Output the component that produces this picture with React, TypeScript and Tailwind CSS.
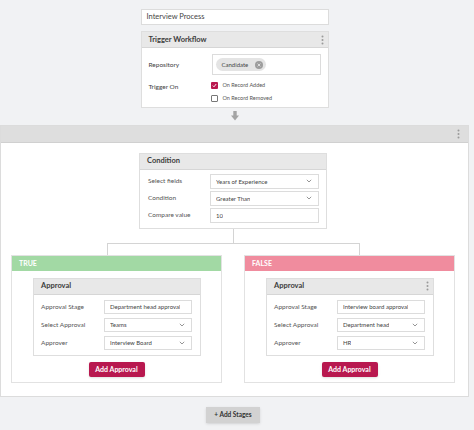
import React from 'react';

const Kebab: React.FC = () => (
  <svg width="3" height="10" viewBox="0 0 3 10" className="text-[#9a9a9a]">
    <circle cx="1.5" cy="1.5" r="1" fill="currentColor" />
    <circle cx="1.5" cy="5" r="1" fill="currentColor" />
    <circle cx="1.5" cy="8.5" r="1" fill="currentColor" />
  </svg>
);

const Chevron: React.FC = () => (
  <svg width="6" height="4" viewBox="0 0 6 4" fill="none">
    <polyline points="0.8,0.8 3,3 5.2,0.8" stroke="#8a8a8a" strokeWidth="0.9" />
  </svg>
);

const Field: React.FC<{ value: string; select?: boolean; h?: string }> = ({ value, select, h = 'h-[15px]' }) => (
  <div className={`flex ${h} flex-1 items-center justify-between border border-[#dcdcdc] bg-white pl-[5px] pr-[6px] text-[6px] text-[#444]`}>
    <span className="truncate">{value}</span>
    {select && <Chevron />}
  </div>
);

const CardHeader: React.FC<{ title: string; kebab?: boolean; h?: string }> = ({ title, kebab, h = 'h-[16px]' }) => (
  <div className={`flex ${h} items-center justify-between border-b border-[#d6d6d6] bg-[#e8e8e8] pl-[7px] pr-[4px]`}>
    <span className="text-[7.5px] font-bold text-[#3c3c3c]">{title}</span>
    {kebab && <Kebab />}
  </div>
);

const ApprovalCard: React.FC<{ stage: string; approval: string; approver: string; kebab?: boolean }> = ({
  stage,
  approval,
  approver,
  kebab,
}) => (
  <div className="ml-[21px] w-[168px] border border-[#dedede] bg-white">
    <CardHeader title="Approval" kebab={kebab} />
    <div className="flex flex-col gap-[4px] pb-[5px] pl-[7px] pr-[8px] pt-[5px]">
      {[
        ['Approval Stage', stage, false],
        ['Select Approval', approval, true],
        ['Approver', approver, true],
      ].map(([label, val, sel]) => (
        <div key={label as string} className="flex items-center">
          <span className="w-[63px] text-[6.5px] text-[#555]">{label as string}</span>
          <Field value={val as string} select={sel as boolean} h="h-[14px]" />
        </div>
      ))}
    </div>
  </div>
);

const Branch: React.FC<{ label: string; color: string; children: React.ReactNode }> = ({ label, color, children }) => (
  <div className="w-[211px] border border-[#e2e2e2] bg-white">
    <div className={`flex h-[15px] items-center pl-[7px] ${color}`}>
      <span className="text-[7px] font-bold text-white">{label}</span>
    </div>
    <div className="pt-[7px]">{children}</div>
    <div className="flex justify-center pb-[5px] pt-[6px]">
      <button className="h-[15px] w-[56px] rounded-[2px] bg-[#b8184f] text-[7px] font-bold text-white shadow-sm">
        Add Approval
      </button>
    </div>
  </div>
);

export default function App() {
  return (
    <div
      className="h-[430px] w-[474px] overflow-hidden bg-[#f1f2f4]"
      style={{ fontFamily: 'Lato, "Open Sans", sans-serif' }}
    >
      <div className="flex w-[469px] flex-col items-center">
        <div className="mt-[9px] flex h-[16px] w-[188px] items-center border border-[#dcdcdc] bg-white pl-[5px] text-[7.5px] text-[#444]">
          Interview Process
        </div>

        <div className="mt-[6px] w-[188px] border border-[#dedede] bg-white">
          <CardHeader title="Trigger Workflow" kebab />
          <div className="flex flex-col pb-[4px] pl-[7px] pr-[7px] pt-[6px]">
            <div className="flex items-center">
              <span className="w-[63px] text-[6.5px] text-[#444]">Repository</span>
              <div className="flex h-[21px] flex-1 items-center border border-[#dcdcdc] bg-white pl-[3px]">
                <div className="flex h-[13px] items-center gap-[7px] rounded-full bg-[#e4e4e4] pl-[6px] pr-[3px]">
                  <span className="text-[6px] text-[#444]">Candidate</span>
                  <span className="flex h-[8px] w-[8px] items-center justify-center rounded-full bg-[#9d9d9d]">
                    <svg width="4" height="4" viewBox="0 0 4 4">
                      <path d="M0.6 0.6 L3.4 3.4 M3.4 0.6 L0.6 3.4" stroke="#e4e4e4" strokeWidth="0.9" />
                    </svg>
                  </span>
                </div>
              </div>
            </div>
            <div className="mt-[6px] flex">
              <span className="w-[62px] pt-[1px] text-[6.5px] text-[#444]">Trigger On</span>
              <div className="flex flex-col gap-[5px]">
                <div className="flex items-center gap-[5px]">
                  <span className="flex h-[7px] w-[7px] items-center justify-center rounded-[1px] bg-[#b8184f]">
                    <svg width="5" height="5" viewBox="0 0 5 5" fill="none">
                      <polyline points="0.8,2.6 2,3.8 4.2,1" stroke="white" strokeWidth="0.9" />
                    </svg>
                  </span>
                  <span className="text-[5.5px] text-[#555]">On Record Added</span>
                </div>
                <div className="flex items-center gap-[5px]">
                  <span className="h-[7px] w-[7px] rounded-[1px] border border-[#777] bg-white" />
                  <span className="text-[5.5px] text-[#555]">On Record Removed</span>
                </div>
              </div>
            </div>
          </div>
        </div>

        <div className="flex h-[17px] items-center justify-center">
          <svg width="8" height="10" viewBox="0 0 8 10">
            <rect x="2.3" y="0" width="3.4" height="5" fill="#a4a4a4" />
            <polygon points="0,4.6 8,4.6 4,9.5" fill="#a4a4a4" />
          </svg>
        </div>
      </div>

      <div className="w-[469px] border border-[#dcdcdc] bg-white">
        <div className="flex h-[17px] items-center justify-end border-b border-[#d0d0d0] bg-[#dedede] pr-[8px]">
          <Kebab />
        </div>

        <div className="flex flex-col items-center pt-[10px]">
          <div className="ml-[-3px] w-[188px] border border-[#dedede] bg-white">
            <CardHeader title="Condition" />
            <div className="flex flex-col gap-[2px] pb-[5px] pl-[8px] pr-[7px] pt-[4px]">
              {[
                ['Select fields', 'Years of Experience', true],
                ['Condition', 'Greater Than', true],
                ['Compare value', '10', false],
              ].map(([label, val, sel]) => (
                <div key={label as string} className="flex items-center">
                  <span className="w-[62px] text-[6.5px] text-[#555]">{label as string}</span>
                  <Field value={val as string} select={sel as boolean} />
                </div>
              ))}
            </div>
          </div>
          <div className="ml-[-3px] h-[14px] w-px bg-[#d4d4d4]" />
        </div>

        <div className="ml-[106px] h-[12px] w-[253px] border-l border-r border-t border-[#d4d4d4]" />

        <div className="flex gap-[22px] pb-[13px] pl-[10px]">
          <Branch label="TRUE" color="bg-[#a2d9a4]">
            <ApprovalCard stage="Department head approval" approval="Teams" approver="Interview Board" />
          </Branch>
          <Branch label="FALSE" color="bg-[#f08c9e]">
            <ApprovalCard stage="Interview board approval" approval="Department head" approver="HR" kebab />
          </Branch>
        </div>
      </div>

      <div className="flex w-[469px] justify-center pt-[10px]">
        <button className="ml-[-3px] h-[16px] w-[54px] bg-[#d2d2d2] text-[6.5px] font-bold text-[#333] shadow-sm">
          + Add Stages
        </button>
      </div>
    </div>
  );
}
